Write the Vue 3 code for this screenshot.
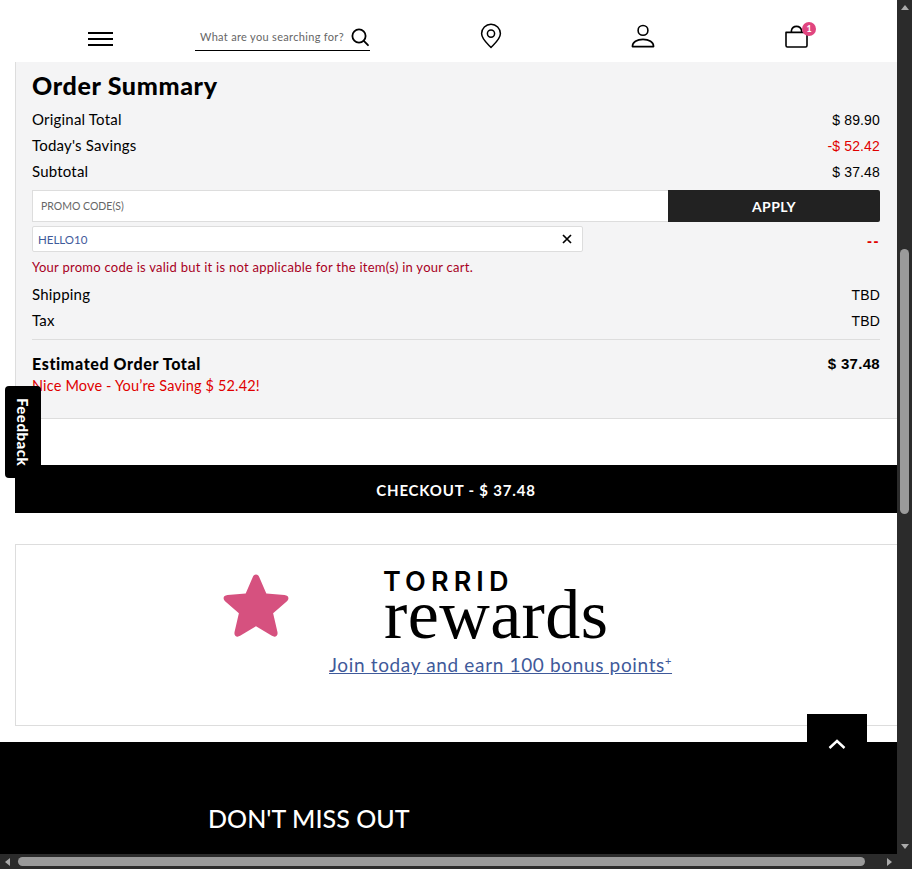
<template>
  <div class="window">
    <div class="page">
      <header class="top-bar">
        <button class="menu-btn" aria-label="Menu">
          <span></span><span></span><span></span>
        </button>
        <div class="search">
          <span class="search-text">What are you searching for?</span>
          <svg width="20" height="20" viewBox="0 0 20 20" fill="none" stroke="#000" stroke-width="1.8">
            <circle cx="9" cy="9" r="6.6" />
            <path d="M13.8 13.8 L18 18.2" stroke-linecap="round" />
          </svg>
        </div>
        <svg class="pin" width="22" height="26" viewBox="0 0 22 26" fill="none" stroke="#000" stroke-width="1.5">
          <path d="M11 24.4 C8.6 21.8 1.6 16.4 1.6 10.6 A9.4 9.4 0 0 1 20.4 10.6 C20.4 16.4 13.4 21.8 11 24.4 Z" stroke-linejoin="round" />
          <circle cx="11" cy="10.6" r="3.6" />
        </svg>
        <svg class="user" width="24" height="24" viewBox="0 0 24 24" fill="none" stroke="#000" stroke-width="1.6">
          <circle cx="12" cy="6.4" r="4.9" />
          <path d="M1.4 22.6 C1.4 18 6 15.4 12 15.4 C18 15.4 22.6 18 22.6 22.6 Z" stroke-linejoin="round" />
        </svg>
        <div class="bag">
          <svg width="25" height="24" viewBox="0 0 25 24" fill="none" stroke="#000" stroke-width="1.6">
            <path d="M2 8.4 H23 V21.6 A1.4 1.4 0 0 1 21.6 23 H3.4 A1.4 1.4 0 0 1 2 21.6 Z" stroke-linejoin="round" />
            <path d="M7.4 8.4 V6.6 A5.2 5.2 0 0 1 17.6 6.6 V8.4" />
          </svg>
          <span class="bag-count">1</span>
        </div>
      </header>

      <section class="summary">
        <h2>Order Summary</h2>
        <div class="row"><span>Original Total</span><span class="num">$ 89.90</span></div>
        <div class="row"><span>Today's Savings</span><span class="num red">-$ 52.42</span></div>
        <div class="row"><span>Subtotal</span><span class="num">$ 37.48</span></div>

        <div class="promo">
          <div class="promo-input">PROMO CODE(S)</div>
          <button class="apply">APPLY</button>
        </div>
        <div class="applied-row">
          <div class="applied">
            <span>HELLO10</span>
            <svg width="10" height="10" viewBox="0 0 10 10" stroke="#000" stroke-width="1.7">
              <path d="M1 1 L9 9 M9 1 L1 9" />
            </svg>
          </div>
          <span class="dashes">--</span>
        </div>
        <p class="promo-error">Your promo code is valid but it is not applicable for the item(s) in your cart.</p>

        <div class="row"><span>Shipping</span><span class="num">TBD</span></div>
        <div class="row"><span>Tax</span><span class="num">TBD</span></div>
        <div class="divider"></div>
        <div class="row total"><span>Estimated Order Total</span><span class="num">$ 37.48</span></div>
        <p class="nice-move">Nice Move - You’re Saving $ 52.42!</p>
      </section>

      <button class="checkout">CHECKOUT - $ 37.48</button>

      <section class="rewards">
        <svg class="star" width="66" height="65" viewBox="1 1 64 62">
          <path d="M33 2 C34.6 2 35.5 3 36.2 4.6 L43 20.4 L60.6 21.8 C64.6 22.2 65.6 25.4 63 27.8 L49.6 39.4 L53.8 57.6 C54.6 61.4 51.6 63.4 48.4 61.4 L33 52 L17.6 61.4 C14.4 63.4 11.4 61.4 12.2 57.6 L16.4 39.4 L3 27.8 C0.4 25.4 1.4 22.2 5.4 21.8 L23 20.4 L29.8 4.6 C30.5 3 31.4 2 33 2 Z" fill="#d6517f" />
        </svg>
        <div class="rewards-logo">
          <div class="brand">TORRID</div>
          <div class="rewards-word">rewards</div>
        </div>
        <a class="join" href="#">Join today and earn 100 bonus points<sup>+</sup></a>
      </section>

      <footer class="footer">
        <h3>DON'T MISS OUT</h3>
      </footer>

      <button class="feedback"><span>Feedback</span></button>
      <button class="to-top" aria-label="Back to top">
        <svg width="18" height="12" viewBox="0 0 18 12" fill="none" stroke="#fff" stroke-width="2.4">
          <path d="M1.5 10 L9 3 L16.5 10" />
        </svg>
      </button>
    </div>

    <div class="scroll-y">
      <span class="arrow up"></span>
      <div class="track-y"><div class="thumb-y"></div></div>
      <span class="arrow down"></span>
    </div>
    <div class="scroll-x">
      <span class="arrow left"></span>
      <div class="track-x"><div class="thumb-x"></div></div>
      <span class="arrow right"></span>
    </div>
    <div class="corner"></div>
  </div>
</template>

<script setup>
</script>

<style>
html, body {
  margin: 0;
  overflow: hidden;
}
</style>

<style scoped>
.window {
  display: grid;
  grid-template-columns: 897px 15px;
  grid-template-rows: 854px 15px;
  width: 912px;
  height: 869px;
  overflow: hidden;
  font-family: Lato, "Open Sans", sans-serif;
  color: #000;
}

.page {
  position: relative;
  height: 854px;
  overflow: hidden;
  background: #fff;
}

button {
  border: none;
  font-family: inherit;
  padding: 0;
}

.top-bar {
  display: flex;
  align-items: center;
  height: 62px;
  padding: 16px 0 0 88px;
  box-sizing: border-box;
}

.menu-btn {
  display: flex;
  flex-direction: column;
  gap: 4px;
  width: 25px;
  background: none;
}

.menu-btn span {
  display: block;
  height: 2px;
  background: #000;
}

.search {
  display: flex;
  align-items: center;
  justify-content: space-between;
  width: 175px;
  height: 30px;
  margin: -6px 0 0 82px;
  padding: 2px 0 0 5px;
  box-sizing: border-box;
  border-bottom: 1px solid #000;
}

.search-text {
  font-size: 11px;
  letter-spacing: 0.32px;
  color: #666;
  white-space: nowrap;
}

.pin {
  margin: -6px 0 0 110px;
}

.user {
  margin: -6px 0 0 129px;
}

.bag {
  position: relative;
  height: 24px;
  margin: -6px 0 0 129px;
}

.bag-count {
  position: absolute;
  top: -2px;
  right: -7px;
  width: 14px;
  height: 14px;
  border-radius: 50%;
  background: #e0457f;
  color: #fff;
  font-size: 9px;
  font-weight: 700;
  line-height: 14px;
  text-align: center;
}

.summary {
  height: 357px;
  margin-left: 15px;
  padding: 0 17px 0 16px;
  box-sizing: border-box;
  background: #f4f4f5;
  border-left: 1px solid #ddd;
  border-bottom: 1px solid #ddd;
}

.summary h2 {
  height: 44px;
  margin: 0;
  font-size: 25px;
  font-weight: 900;
  line-height: 47px;
  letter-spacing: 0.65px;
}

.row {
  display: flex;
  align-items: center;
  justify-content: space-between;
  height: 26px;
  font-size: 15px;
  letter-spacing: 0.2px;
}

.num {
  padding-top: 1px;
  font-family: "Liberation Sans", Arial, sans-serif;
  font-size: 14px;
  letter-spacing: 0.15px;
}

.red {
  color: #e00000;
}

.promo {
  display: flex;
  height: 32px;
  margin-top: 6px;
}

.promo-input {
  flex: 1;
  padding-left: 8px;
  background: #fff;
  border: 1px solid #ddd;
  border-right: none;
  font-size: 10.5px;
  line-height: 30px;
  color: #666;
}

.apply {
  width: 212px;
  background: #222;
  border-radius: 0 2px 2px 0;
  color: #fff;
  font-size: 14px;
  font-weight: 700;
  letter-spacing: 0.4px;
}

.applied-row {
  display: flex;
  align-items: center;
  justify-content: space-between;
  margin-top: 4px;
}

.applied {
  display: flex;
  align-items: center;
  justify-content: space-between;
  width: 551px;
  height: 26px;
  padding: 0 10px 0 5px;
  box-sizing: border-box;
  background: #fff;
  border: 1px solid #ddd;
  border-radius: 2px;
  font-size: 11.5px;
  color: #3f5a9a;
}

.dashes {
  margin-top: 3px;
  font-family: "Liberation Sans", Arial, sans-serif;
  font-size: 15px;
  font-weight: 700;
  letter-spacing: 1.5px;
  color: #e00000;
}

.promo-error {
  height: 17px;
  margin: 7px 0 5px;
  font-size: 13px;
  line-height: 17px;
  letter-spacing: 0.26px;
  color: #a8001e;
}

.divider {
  height: 1px;
  margin-top: 6px;
  background: #ddd;
}

.total {
  height: 24px;
  margin-top: 11px;
  font-size: 16px;
  font-weight: 900;
  letter-spacing: 0.62px;
}

.total .num {
  font-size: 15px;
  font-weight: 700;
  letter-spacing: 0.3px;
}

.nice-move {
  margin: 1px 0 0;
  font-size: 14.5px;
  line-height: 20px;
  letter-spacing: 0.16px;
  color: #e00000;
}

.checkout {
  display: block;
  width: 882px;
  height: 48px;
  margin: 46px 0 0 15px;
  padding-top: 2px;
  background: #000;
  color: #fff;
  font-size: 15px;
  font-weight: 700;
  letter-spacing: 0.8px;
}

.rewards {
  display: grid;
  grid-template-columns: 66px 1fr;
  column-gap: 94px;
  align-content: start;
  height: 182px;
  margin: 31px 0 0 15px;
  padding: 24px 0 0 207px;
  box-sizing: border-box;
  border: 1px solid #ddd;
  border-right: none;
}

.star {
  margin-top: 4px;
}

.brand {
  font-family: Inter, Lato, sans-serif;
  font-size: 27px;
  font-weight: 600;
  line-height: 25px;
  letter-spacing: 5.1px;
}

.rewards-word {
  margin-top: -4px;
  margin-left: 1px;
  font-family: "Liberation Serif", "Times New Roman", serif;
  font-size: 70px;
  line-height: 50px;
  letter-spacing: 0.4px;
}

.join {
  grid-column: 1 / 3;
  margin: 13px 0 0 106px;
  font-size: 19px;
  letter-spacing: 0.65px;
  color: #3f5a9a;
  white-space: nowrap;
}

.join sup {
  font-size: 11px;
  line-height: 0;
}

.footer {
  height: 112px;
  margin-top: 16px;
  padding: 60px 0 0 208px;
  box-sizing: border-box;
  background: #000;
  color: #fff;
}

.footer h3 {
  margin: 0;
  font-size: 25px;
  font-weight: 500;
  line-height: 32px;
  letter-spacing: 0.05px;
}

.feedback {
  position: absolute;
  top: 386px;
  left: 5px;
  display: flex;
  align-items: center;
  justify-content: center;
  width: 36px;
  height: 92px;
  background: #000;
  border-radius: 4px;
  color: #fff;
}

.feedback span {
  writing-mode: vertical-rl;
  font-size: 15px;
  font-weight: 900;
  letter-spacing: 0.5px;
}

.to-top {
  position: absolute;
  top: 714px;
  left: 807px;
  display: flex;
  justify-content: center;
  width: 60px;
  height: 60px;
  padding-top: 24px;
  box-sizing: border-box;
  background: #000;
}

.scroll-y,
.scroll-x,
.corner {
  background: #2b2b2b;
}

.scroll-y {
  display: flex;
  flex-direction: column;
  align-items: center;
  height: 854px;
}

.track-y {
  flex: 1;
  width: 9px;
  padding-top: 234px;
}

.thumb-y {
  width: 9px;
  height: 265px;
  border-radius: 5px;
  background: #9a9a9a;
}

.scroll-x {
  display: flex;
  align-items: center;
  width: 897px;
}

.track-x {
  flex: 1;
  height: 9px;
  padding-left: 3px;
}

.thumb-x {
  width: 847px;
  height: 9px;
  border-radius: 5px;
  background: #9a9a9a;
}

.arrow {
  flex: none;
  display: block;
  width: 0;
  height: 0;
  margin: 5px;
  border: 4px solid transparent;
}

.arrow.up {
  border-top: none;
  border-bottom: 5px solid #aaa;
}

.arrow.down {
  border-bottom: none;
  border-top: 5px solid #aaa;
}

.arrow.left {
  border-left: none;
  border-right: 5px solid #aaa;
}

.arrow.right {
  border-right: none;
  border-left: 5px solid #aaa;
}
</style>
